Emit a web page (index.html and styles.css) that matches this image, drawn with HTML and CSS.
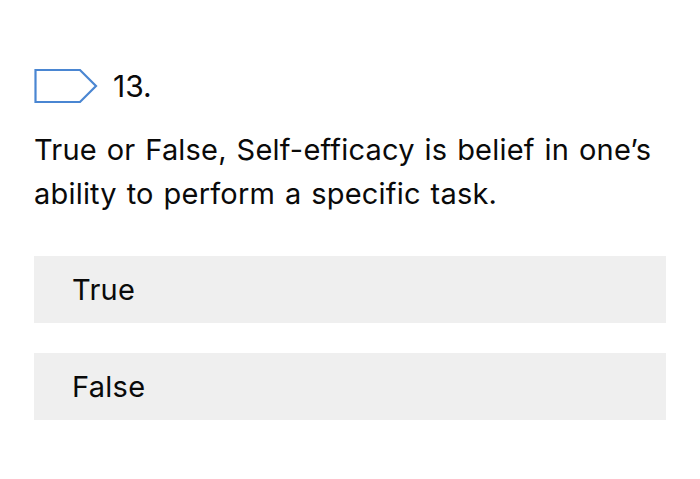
FILE: index.html
```html
<!DOCTYPE html>
<html>
<head>
<meta charset="utf-8">
<link rel="stylesheet" href="styles.css">
</head>
<body>
<div class="page">
  <div class="head">
    <svg class="flag" width="64" height="36" viewBox="0 0 64 36">
      <path d="M1.5 2 H46 L62 18 L46 34 H1.5 Z" fill="none" stroke="#4a86d2" stroke-width="2.2" stroke-linejoin="miter"/>
    </svg>
    <span class="num">13.</span>
  </div>
  <p class="question">True or False, Self-efficacy is belief in one’s ability to perform a specific task.</p>
  <div class="options">
    <div class="option">True</div>
    <div class="option">False</div>
  </div>
</div>
</body>
</html>
```
FILE: styles.css
```css
html, body {
  margin: 0;
  padding: 0;
  background: #ffffff;
}
body {
  font-family: Inter, "Liberation Sans", Arial, sans-serif;
  color: #0a0a0a;
}
.page {
  padding: 68px 34px 0 34px;
}
.head {
  display: flex;
  align-items: center;
  height: 36px;
}
.flag {
  display: block;
  flex: none;
}
.num {
  margin-left: 15px;
  font-size: 30px;
  line-height: 36px;
}
.question {
  margin: 24px 0 0 0;
  font-size: 29px;
  line-height: 44px;
  letter-spacing: 0.2px;
  word-spacing: 1.5px;
}
.options {
  margin-top: 40px;
  display: flex;
  flex-direction: column;
  gap: 30px;
}
.option {
  background: #efefef;
  font-size: 29px;
  line-height: 44px;
  letter-spacing: 0.3px;
  padding: 12px 38px 11px 38px;
}
```
